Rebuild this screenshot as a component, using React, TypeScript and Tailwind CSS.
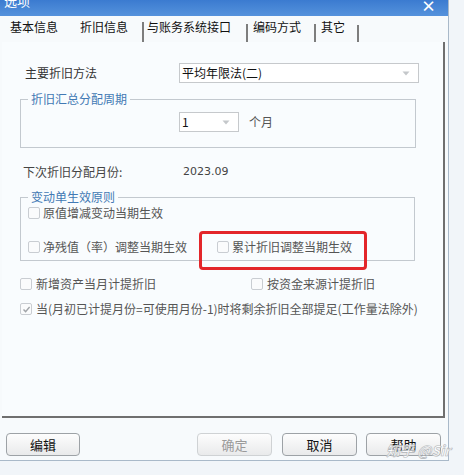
const font = { fontFamily: '"Noto Sans CJK SC", "Liberation Sans", sans-serif' };

function Check({ checked = false }: { checked?: boolean }) {
  return (
    <span className="w-[12px] h-[12px] shrink-0 rounded-[2px] border border-[#c9cdd2] bg-[#fafbfc] flex items-center justify-center">
      {checked && (
        <svg width="9" height="9" viewBox="0 0 9 9">
          <path d="M1.5 4.5 L3.6 6.6 L7.6 2" fill="none" stroke="#a0a4a8" strokeWidth="1.4" />
        </svg>
      )}
    </span>
  );
}

function Arrow() {
  return (
    <svg width="8" height="5" viewBox="0 0 8 5">
      <path d="M0.5 0.5 L7.5 0.5 L4 4.5 Z" fill="#c4c7ca" />
    </svg>
  );
}

const tabs = ["基本信息", "折旧信息", "与账务系统接口", "编码方式", "其它"];

function Btn({ label, disabled = false, w }: { label: string; disabled?: boolean; w: string }) {
  return (
    <div
      className={`${w} h-[23px] rounded-[4px] border flex items-center justify-center text-[13px] bg-gradient-to-b from-[#fdfdfd] to-[#e9eaeb] ${
        disabled ? "border-[#cfd2d4] text-[#9a9a9a]" : "border-[#9da2a6] text-[#111]"
      }`}
    >
      {label}
    </div>
  );
}

export default function App() {
  return (
    <div className="w-[464px] h-[475px] bg-[#f1f5f9] relative overflow-hidden" style={font}>
      <div className="w-[449px] h-[461px] border-r border-b border-[#a9b9c9] bg-[#f7fafc] flex flex-col">
        {/* title bar */}
        <div className="h-[16px] bg-gradient-to-b from-[#3b7bd0] to-[#5592dc] flex justify-between overflow-hidden">
          <span className="text-white text-[13px] leading-[14px] -mt-[6px] ml-[4px]">选项</span>
          <span className="text-white font-bold text-[15px] leading-[12px] mr-[12px]">×</span>
        </div>

        {/* tabs */}
        <div className="h-[26px] flex items-end text-[12px] text-[#111] leading-[14px]">
          <span className="ml-[10px] mb-[8px]">{tabs[0]}</span>
          <span className="ml-[22px] mb-[8px]">{tabs[1]}</span>
          <span className="ml-[14px] w-[2px] h-[20px] bg-[#7d7d7d]" />
          <span className="ml-[3px] mb-[8px]">{tabs[2]}</span>
          <span className="ml-[15px] w-[2px] h-[18px] bg-[#7d7d7d]" />
          <span className="ml-[5px] mb-[8px]">{tabs[3]}</span>
          <span className="ml-[13px] w-[2px] h-[18px] bg-[#7d7d7d]" />
          <span className="ml-[5px] mb-[8px]">{tabs[4]}</span>
          <span className="ml-[12px] w-[2px] h-[17px] bg-[#7d7d7d]" />
        </div>

        {/* panel */}
        <div className="ml-[2px] w-[443px] h-[376px] border-r-2 border-b-2 border-[#6f6f6f] bg-[#f9fcfe] pl-[18px] text-[12px] leading-[14px] text-[#333]">
          <div className="mt-[21px] h-[20px] flex items-center">
            <span className="ml-[5px] w-[154px]">主要折旧方法</span>
            <div className="w-[240px] h-[20px] border border-[#c6c9cc] bg-white flex items-center justify-between pl-[2px] pr-[8px] text-[#111]">
              <span>平均年限法(二)</span>
              <Arrow />
            </div>
          </div>

          <fieldset className="mt-[9px] w-[396px] border border-[#c3c9cf] pb-[15px]">
            <legend className="ml-[7px] px-[3px] text-[#4279b4]">折旧汇总分配周期</legend>
            <div className="mt-[6px] ml-[158px] flex items-center">
              <div className="w-[60px] h-[20px] border border-[#c6c9cc] bg-white flex items-center justify-between pl-[2px] pr-[8px] text-[#111]">
                <span>1</span>
                <Arrow />
              </div>
              <span className="ml-[10px] text-[#555]">个月</span>
            </div>
          </fieldset>

          <div className="mt-[17px] flex items-center h-[14px] text-[#444]">
            <span className="ml-[3px] w-[160px]">下次折旧分配月份:</span>
            <span className="text-[11px]" style={{ fontFamily: '"DejaVu Sans", sans-serif' }}>2023.09</span>
          </div>

          <fieldset className="relative mt-[11px] w-[395px] border border-[#c3c9cf] pb-[5px]">
            <legend className="ml-[7px] px-[3px] text-[#4279b4]">变动单生效原则</legend>
            <div className="mt-[1px] ml-[7px] h-[16px] flex items-center gap-[3px] text-[#555]">
              <Check />
              <span>原值增减变动当期生效</span>
            </div>
            <div className="mt-[18px] ml-[7px] h-[16px] flex items-center text-[#555]">
              <div className="w-[189px] flex items-center gap-[3px]">
                <Check />
                <span>净残值（率）调整当期生效</span>
              </div>
              <div className="flex items-center gap-[3px]">
                <Check />
                <span>累计折旧调整当期生效</span>
              </div>
            </div>
            <div className="absolute left-[178px] top-[27px] w-[168px] h-[39px] border-[3px] border-[#e3262a] rounded-[4px]" />
          </fieldset>

          <div className="mt-[15px] h-[16px] flex items-center text-[#555]">
            <div className="w-[231px] flex items-center gap-[4px]">
              <Check />
              <span>新增资产当月计提折旧</span>
            </div>
            <div className="flex items-center gap-[4px]">
              <Check />
              <span>按资金来源计提折旧</span>
            </div>
          </div>
          <div className="mt-[9px] h-[16px] flex items-center gap-[4px] text-[#555]">
            <Check checked />
            <span>当(月初已计提月份=可使用月份-1)时将剩余折旧全部提足(工作量法除外)</span>
          </div>
        </div>

        {/* buttons */}
        <div className="mt-[15px] flex items-center">
          <div className="ml-[6px]">
            <Btn label="编辑" w="w-[74px]" />
          </div>
          <div className="ml-[117px]">
            <Btn label="确定" disabled w="w-[75px]" />
          </div>
          <div className="ml-[10px]">
            <Btn label="取消" w="w-[75px]" />
          </div>
          <div className="ml-[9px]">
            <Btn label="帮助" w="w-[75px]" />
          </div>
        </div>
      </div>

      <span
        className="absolute left-[386px] top-[442px] text-[14px] italic font-bold text-white/80 leading-[16px]"
        style={{ WebkitTextStroke: "0.6px #b0b4b8" }}
      >
        知乎 @Sir
      </span>
    </div>
  );
}
